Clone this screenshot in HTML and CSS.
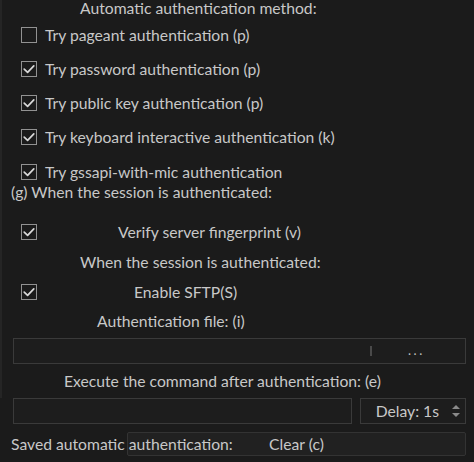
FILE: index.html
```html
<!DOCTYPE html>
<html>
<head>
<meta charset="utf-8">
<link rel="stylesheet" href="styles.css">
</head>
<body>
<div class="page">
  <div class="framed">
    <div class="label title">Automatic authentication method:</div>
    <div class="check-row row34"><span class="box"></span><span class="text">Try pageant authentication (p)</span></div>
    <div class="check-row row34"><span class="box on"><svg viewBox="0 0 16 16"><polyline points="3.2,8.2 6.6,11.4 12.8,4.8"/></svg></span><span class="text">Try password authentication (p)</span></div>
    <div class="check-row row34"><span class="box on"><svg viewBox="0 0 16 16"><polyline points="3.2,8.2 6.6,11.4 12.8,4.8"/></svg></span><span class="text">Try public key authentication (p)</span></div>
    <div class="check-row row34"><span class="box on"><svg viewBox="0 0 16 16"><polyline points="3.2,8.2 6.6,11.4 12.8,4.8"/></svg></span><span class="text">Try keyboard interactive authentication (k)</span></div>
    <div class="check-row row-gss"><span class="box on"><svg viewBox="0 0 16 16"><polyline points="3.2,8.2 6.6,11.4 12.8,4.8"/></svg></span><span class="text">Try gssapi-with-mic authentication</span></div>
    <div class="label row-g">(g) When the session is authenticated:</div>
    <div class="check-row row-verify"><span class="box on"><svg viewBox="0 0 16 16"><polyline points="3.2,8.2 6.6,11.4 12.8,4.8"/></svg></span><span class="text text-verify">Verify server fingerprint (v)</span></div>
    <div class="label row-when">When the session is authenticated:</div>
    <div class="check-row row-sftp"><span class="box on"><svg viewBox="0 0 16 16"><polyline points="3.2,8.2 6.6,11.4 12.8,4.8"/></svg></span><span class="text text-sftp">Enable SFTP(S)</span></div>
    <div class="label row-file">Authentication file: (i)</div>
    <div class="field file-field">
      <span class="sep"></span>
      <span class="dots">...</span>
    </div>
    <div class="label row-exec">Execute the command after authentication: (e)</div>
  </div>
  <div class="cmd-row">
    <div class="field cmd-field"></div>
    <div class="field spin">
      <span class="spin-text">Delay: 1s</span>
      <svg class="arrows" viewBox="0 0 10 16"><polygon points="1,6 5,2 9,6"/><polygon points="1,10 9,10 5,14"/></svg>
    </div>
  </div>
  <div class="saved-row">
    <span class="saved-label">Saved automatic authentication:</span>
    <div class="clear-btn">Clear (c)</div>
  </div>
</div>
</body>
</html>
```
FILE: styles.css
```css
html, body {
  margin: 0;
  padding: 0;
  background: #1b1b1b;
}
body {
  font-family: "Lato", "Liberation Sans", sans-serif;
  font-size: 15.7px;
  color: #c8c8c8;
  width: 474px;
  height: 462px;
  overflow: hidden;
}
.page {
  display: flex;
  flex-direction: column;
}
.framed {
  display: flex;
  flex-direction: column;
  border-left: 2px solid #252525;
}
.label {
  white-space: nowrap;
  display: flex;
  align-items: center;
}
.title { height: 16px; padding-left: 78px; margin-bottom: 2px; }
.check-row {
  display: flex;
  align-items: center;
  padding-left: 19px;
  white-space: nowrap;
}
.row34 { height: 34px; }
.row-gss { height: 20px; margin-top: 8px; }
.row-g { height: 20px; padding-left: 9px; }
.row-verify { height: 32px; margin-top: 14px; }
.row-when { height: 28px; padding-left: 78px; }
.row-sftp { height: 32px; }
.row-file { height: 26px; padding-left: 95px; }
.row-exec { height: 34px; padding-left: 62px; }
.box {
  width: 16px;
  height: 16px;
  box-sizing: border-box;
  border: 1.5px solid #929292;
  display: flex;
  align-items: center;
  justify-content: center;
  flex-shrink: 0;
}
.box svg {
  width: 16px;
  height: 16px;
  flex-shrink: 0;
}
.box polyline {
  fill: none;
  stroke: #d8d8d8;
  stroke-width: 1.7;
  stroke-linecap: round;
  stroke-linejoin: round;
}
.text { margin-left: 8px; }
.text-verify { margin-left: 81px; }
.text-sftp { margin-left: 97px; }
.field {
  box-sizing: border-box;
  border: 1.5px solid #3a3a3a;
  background: #1d1d1d;
  height: 26px;
}
.file-field {
  margin: 4px 8px 0 11px;
  display: flex;
  align-items: center;
}
.sep {
  width: 2px;
  height: 10px;
  background: #4a4a4a;
  margin-left: 356px;
}
.dots {
  margin-left: 36px;
  letter-spacing: 2.5px;
  font-size: 13px;
  color: #bdbdbd;
  padding-bottom: 2px;
}
.cmd-row {
  display: flex;
  gap: 8px;
  padding: 0 8px 0 13px;
}
.cmd-field { width: 339px; }
.spin {
  flex: 1;
  display: flex;
  align-items: center;
  justify-content: flex-end;
  padding-right: 4px;
}
.spin-text { margin-right: 12px; }
.arrows { width: 10px; height: 16px; }
.arrows polygon { fill: #8a8a8a; }
.saved-row {
  display: flex;
  align-items: center;
  margin-top: 8px;
  padding: 0 8px 0 11px;
}
.saved-label {
  width: 116px;
  white-space: nowrap;
  position: relative;
  z-index: 1;
}
.clear-btn {
  flex: 1;
  height: 24px;
  box-sizing: border-box;
  border: 1.5px solid #333333;
  background: #212121;
  border-radius: 2px;
  display: flex;
  align-items: center;
  justify-content: center;
}
```
